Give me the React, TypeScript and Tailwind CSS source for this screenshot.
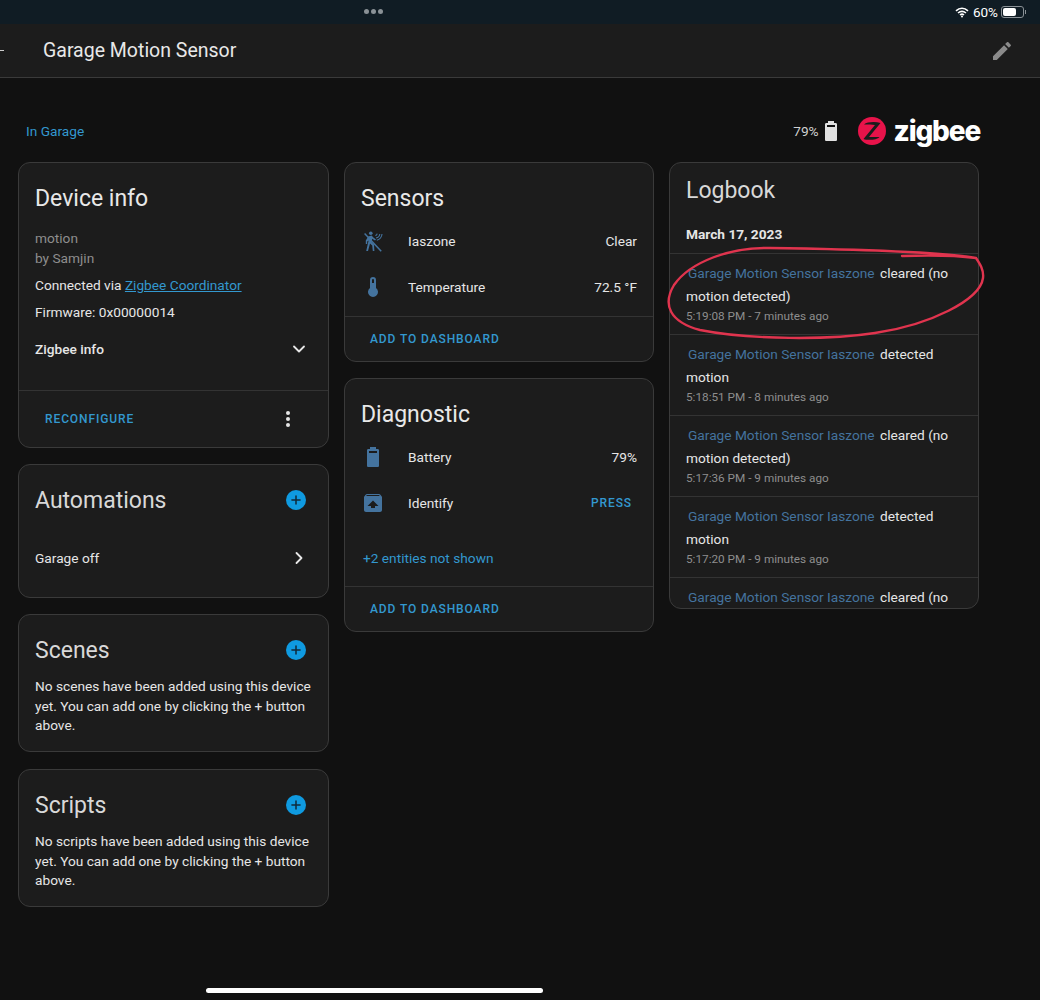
import React from "react";
import { ChevronDown, ChevronRight, Plus } from "lucide-react";

const FONT = "font-['Roboto',sans-serif]";

// Card shell shared by every panel on the device page
function Card({ children, className = "" }: { children: React.ReactNode; className?: string }) {
  return (
    <div className={`rounded-xl border border-[#3a3a3a] bg-[#1c1c1c] overflow-hidden ${className}`}>
      {children}
    </div>
  );
}

function AddButton() {
  return (
    <div className="mb-[2px] flex h-5 w-5 items-center justify-center rounded-full bg-[#0f9ae0]">
      <Plus size={14} strokeWidth={2.6} className="text-[#102a3a]" />
    </div>
  );
}

function CardAction({ label }: { label: string }) {
  return (
    <div className="flex h-[46px] items-center border-t border-[#333333] pb-[2px] pl-[25px]">
      <span className="text-xs font-medium tracking-[0.9px] text-[#3398cf]">{label}</span>
    </div>
  );
}

function EntityRow({
  icon,
  name,
  value,
  action,
}: {
  icon: React.ReactNode;
  name: string;
  value: string;
  action?: boolean;
}) {
  return (
    <div className="flex h-[46px] items-center">
      <div className="flex w-[47px] items-center">{icon}</div>
      <span className="flex-1 text-[13.7px] text-[#e6e6e6]">{name}</span>
      {action ? (
        <span className="mr-[5px] text-xs font-medium tracking-[0.9px] text-[#3398cf]">{value}</span>
      ) : (
        <span className="text-[13.7px] text-[#e6e6e6]">{value}</span>
      )}
    </div>
  );
}

function MotionOffIcon() {
  return (
    <svg width="24" height="24" viewBox="0 0 24 24" fill="#44739e">
      <circle cx="9.8" cy="4.2" r="1.8" />
      <path d="M7.2 7.4 10.6 6.4 12.4 8.6 15 10.6 14 11.6 11.2 9.8 10.6 13 13 15.6 13.4 22H11.8L11.2 16.6 9 14.6 7 22H5.2L7.6 11.6 6.2 12.4V15H4.8V11.4Z" />
      <path d="M3.6 4.6 20.2 22.2" stroke="#44739e" strokeWidth="1.5" />
      <path d="M14.4 6.6A2.4 2.4 0 0 0 16.2 4.6M15 9A4.6 4.6 0 0 0 18.8 5M15.8 11.2A7 7 0 0 0 21 5" fill="none" stroke="#44739e" strokeWidth="1.1" />
    </svg>
  );
}

function ThermometerIcon() {
  return (
    <svg width="24" height="24" viewBox="0 0 24 24" fill="#44739e">
      <path d="M15 13V5A3 3 0 0 0 9 5V13A5 5 0 1 0 15 13M12 4A1 1 0 0 1 13 5V8H11V5A1 1 0 0 1 12 4Z" />
    </svg>
  );
}

function BatteryIcon({ color }: { color: string }) {
  return (
    <svg width="24" height="24" viewBox="0 0 24 24" fill={color}>
      <path d="M16.67 4H15V2H9V4H7.33C6.6 4 6 4.6 6 5.33V20.67C6 21.4 6.6 22 7.33 22H16.67C17.4 22 18 21.4 18 20.67V5.33C18 4.6 17.4 4 16.67 4M16 8H8V6H16V8Z" />
    </svg>
  );
}

function ArchiveUpIcon() {
  return (
    <svg width="24" height="24" viewBox="0 0 24 24" fill="#44739e">
      <path d="M20.55 5.22L19.16 3.54C18.88 3.21 18.47 3 18 3H6C5.53 3 5.12 3.21 4.84 3.54L3.46 5.22C3.17 5.57 3 6 3 6.5V19C3 20.1 3.9 21 5 21H19C20.1 21 21 20.1 21 19V6.5C21 6 20.83 5.57 20.55 5.22M12 9.5L17.5 15H14V17H10V15H6.5L12 9.5M5.12 5L5.93 4H17.93L18.87 5H5.12Z" />
    </svg>
  );
}

function ZigbeeMark() {
  return (
    <svg width="28" height="28" viewBox="0 0 28 28">
      <circle cx="14" cy="14" r="14" fill="#e8134a" />
      <path d="M6 7.5C9 5 17 4.4 22.5 6L11 20H21.5C19 23 10 23.6 5.5 22L17 8C13 7.6 9 7.4 6 7.5Z" fill="#1c1c1c" />
    </svg>
  );
}

function LogEntry({ what, second, time }: { what: string; second?: string; time?: string }) {
  return (
    <div className="h-[81px] border-t border-[#333333] px-4 pt-[8px]">
      <div className="text-[13.7px] leading-[23px] text-[#e6e6e6]">
        <span className="ml-[2px] mr-[2px] text-[#44739e]">Garage Motion Sensor Iaszone</span> {what}
      </div>
      {second && <div className="text-[13.7px] leading-[23px] text-[#e6e6e6]">{second}</div>}
      {time && <div className="mt-[-1px] text-[11.75px] leading-[18px] text-[#8e8e8e]">{time}</div>}
    </div>
  );
}

export default function App() {
  return (
    <div className={`${FONT} relative h-[1000px] w-[1040px] overflow-hidden bg-[#111111]`}>
      {/* iPad status bar */}
      <div className="relative flex h-6 items-center justify-end bg-[#101c24] pr-[14px] text-[13.5px] text-white">
        <div className="absolute left-[364px] top-[9px] flex gap-[2px]">
          <span className="h-[5px] w-[5px] rounded-full bg-[#8a9196]" />
          <span className="h-[5px] w-[5px] rounded-full bg-[#8a9196]" />
          <span className="h-[5px] w-[5px] rounded-full bg-[#8a9196]" />
        </div>
        <svg width="14" height="11" viewBox="0 0 14 11" fill="none" stroke="white" strokeWidth="1.6" className="mr-[4px]">
          <path d="M1 3.8C4.6.6 9.4.6 13 3.8M3 6C5.4 4 8.6 4 11 6M5 8C6.2 7 7.8 7 9 8" />
          <circle cx="7" cy="9.6" r="1" fill="white" stroke="none" />
        </svg>
        <span className="mr-[3px]">60%</span>
        <div className="flex items-center">
          <div className="h-[12px] w-[23px] rounded-[3px] border border-[#8a9196] p-[1px]">
            <div className="h-full w-[13px] rounded-[2px] bg-white" />
          </div>
          <div className="ml-[1px] h-[4px] w-[1px] bg-[#8a9196]" />
        </div>
      </div>

      {/* Toolbar */}
      <div className="relative flex h-[54px] items-center justify-between border-b border-[#3a3a3a] bg-[#1c1c1c] pl-[43px] pr-[26px]">
        <div className="absolute left-0 top-[26px] h-[1px] w-[4px] bg-[#cccccc]" />
        <span className="text-[19.5px] text-[#e8e8e8]">Garage Motion Sensor</span>
        <svg width="24" height="24" viewBox="0 0 24 24" fill="#8a8a8a">
          <path d="M20.71 7.04C21.1 6.65 21.1 6 20.71 5.63L18.37 3.29C18 2.9 17.35 2.9 16.96 3.29L15.12 5.12L18.87 8.87M3 17.25V21H6.75L17.81 9.93L14.06 6.18L3 17.25Z" />
        </svg>
      </div>

      {/* Area and integration line */}
      <div className="flex h-[84px] items-end justify-between pb-[17px] pl-[26px] pr-[60px]">
        <span className="pb-[4px] text-[13.7px] leading-[20px] text-[#3398cf]">In Garage</span>
        <div className="flex items-center">
          <span className="text-[13.7px] text-[#d0d0d0]">79%</span>
          <div className="mr-[15px]">
            <BatteryIcon color="#e1e1e1" />
          </div>
          <ZigbeeMark />
          <span className="ml-[8px] font-['Inter',sans-serif] text-[28px] font-extrabold leading-[28px] tracking-[-1.2px] text-white">
            zigbee
          </span>
        </div>
      </div>

      <div className="flex items-start gap-[15px] pl-[18px]">
        {/* Left column */}
        <div className="flex w-[311px] flex-col gap-4">
          <Card className="h-[286px]">
            <div className="h-[227px] px-4 pt-5">
              <div className="text-[23px] leading-8 text-[#e8e8e8]">Device info</div>
              <div className="mt-[13px] text-[13.7px] leading-[20px] text-[#8e8e8e]">motion</div>
              <div className="text-[13.7px] leading-[20px] text-[#8e8e8e]">by Samjin</div>
              <div className="mt-[7px] text-[13.7px] leading-[20px] text-[#e6e6e6]">
                Connected via <span className="text-[#3398cf] underline">Zigbee Coordinator</span>
              </div>
              <div className="mt-[7px] text-[13.7px] leading-[20px] text-[#e6e6e6]">Firmware: 0x00000014</div>
              <div className="mt-[17px] flex items-center justify-between pr-[3px]">
                <span className="text-[13.7px] font-medium leading-[20px] text-[#e6e6e6]">Zigbee info</span>
                <ChevronDown size={20} strokeWidth={2.2} className="text-[#e6e6e6]" />
              </div>
            </div>
            <div className="flex h-[57px] items-center justify-between border-t border-[#333333] pl-[26px] pr-[38px]">
              <span className="text-xs font-medium tracking-[0.9px] text-[#3398cf]">RECONFIGURE</span>
              <div className="flex flex-col gap-[2px]">
                <span className="h-[4px] w-[4px] rounded-full bg-[#e6e6e6]" />
                <span className="h-[4px] w-[4px] rounded-full bg-[#e6e6e6]" />
                <span className="h-[4px] w-[4px] rounded-full bg-[#e6e6e6]" />
              </div>
            </div>
          </Card>

          <Card className="h-[134px] px-4 pt-5">
            <div className="flex items-center justify-between pr-[6px]">
              <span className="text-[23px] leading-8 text-[#d8d8d8]">Automations</span>
              <AddButton />
            </div>
            <div className="mt-[31px] flex items-center justify-between pr-[3px]">
              <span className="text-[13.7px] leading-[20px] text-[#e6e6e6]">Garage off</span>
              <ChevronRight size={20} strokeWidth={2.2} className="text-[#e6e6e6]" />
            </div>
          </Card>

          <Card className="h-[138px] px-4 pt-5">
            <div className="flex items-center justify-between pr-[6px]">
              <span className="text-[23px] leading-8 text-[#d8d8d8]">Scenes</span>
              <AddButton />
            </div>
            <p className="mt-[10px] text-[13.7px] leading-[19.6px] text-[#e6e6e6]">
              No scenes have been added using this device yet. You can add one by clicking the + button above.
            </p>
          </Card>

          <Card className="mt-[1px] h-[138px] px-4 pt-5">
            <div className="flex items-center justify-between pr-[6px]">
              <span className="text-[23px] leading-8 text-[#d8d8d8]">Scripts</span>
              <AddButton />
            </div>
            <p className="mt-[10px] text-[13.7px] leading-[19.6px] text-[#e6e6e6]">
              No scripts have been added using this device yet. You can add one by clicking the + button above.
            </p>
          </Card>
        </div>

        {/* Middle column */}
        <div className="flex w-[310px] flex-col gap-4">
          <Card className="h-[200px]">
            <div className="h-[153px] px-4 pt-5">
              <div className="text-[23px] leading-8 text-[#e8e8e8]">Sensors</div>
              <div className="mt-[3px]">
                <EntityRow icon={<MotionOffIcon />} name="Iaszone" value="Clear" />
                <EntityRow icon={<ThermometerIcon />} name="Temperature" value="72.5 °F" />
              </div>
            </div>
            <CardAction label="ADD TO DASHBOARD" />
          </Card>

          <Card className="h-[254px]">
            <div className="h-[207px] px-4 pt-5">
              <div className="text-[23px] leading-8 text-[#e8e8e8]">Diagnostic</div>
              <div className="mt-[3px]">
                <EntityRow icon={<BatteryIcon color="#44739e" />} name="Battery" value="79%" />
                <EntityRow icon={<ArchiveUpIcon />} name="Identify" value="PRESS" action />
              </div>
              <div className="mt-[22px] pl-[2px] text-[13.7px] leading-[20px] text-[#3398cf]">+2 entities not shown</div>
            </div>
            <CardAction label="ADD TO DASHBOARD" />
          </Card>
        </div>

        {/* Logbook */}
        <Card className="h-[447px] w-[310px]">
          <div className="px-4 pt-[12px] text-[23px] leading-8 text-[#d8d8d8]">Logbook</div>
          <div className="h-[46px] px-4 pt-[17px] text-[13.7px] font-bold leading-[20px] text-[#e6e6e6]">March 17, 2023</div>
          <LogEntry what="cleared (no" second="motion detected)" time="5:19:08 PM - 7 minutes ago" />
          <LogEntry what="detected" second="motion" time="5:18:51 PM - 8 minutes ago" />
          <LogEntry what="cleared (no" second="motion detected)" time="5:17:36 PM - 9 minutes ago" />
          <LogEntry what="detected" second="motion" time="5:17:20 PM - 9 minutes ago" />
          <LogEntry what="cleared (no" />
        </Card>
      </div>

      {/* Hand-drawn highlight on top of the first log entry */}
      <svg className="absolute left-[660px] top-[240px]" width="330" height="105" viewBox="0 0 330 105" fill="none">
        <path
          d="M242 16C270 15 300 16 316 18M316 18C280 12 180 9 110 8C70 7 30 22 14 45C2 65 10 82 40 90C90 100 170 100 215 93C270 85 320 60 323 38C324 30 320 24 316 18"
          stroke="#e0344e"
          strokeWidth="2.4"
          strokeLinecap="round"
        />
      </svg>

      {/* Home indicator */}
      <div className="absolute bottom-[7px] left-[206px] h-[5px] w-[337px] rounded-full bg-white" />
    </div>
  );
}
